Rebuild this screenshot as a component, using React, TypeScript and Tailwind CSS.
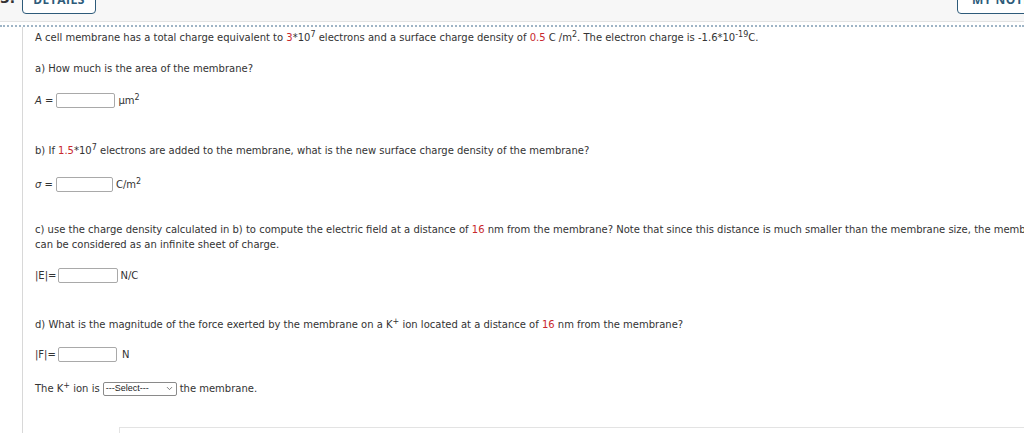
import { ChevronDown } from 'lucide-react';

function Red({ children }: { children: React.ReactNode }) {
  return <span className="text-[#c8282d]">{children}</span>;
}

function Sup({ children }: { children: React.ReactNode }) {
  return <sup className="text-[8px]">{children}</sup>;
}

function AnswerBox({ w = 'w-[59px]' }: { w?: string }) {
  return <span className={`inline-block ${w} h-[15px] border border-[#a9a9a9] rounded-[2px] bg-white align-middle`} />;
}

export default function App() {
  return (
    <div className="w-[1024px] h-[433px] overflow-hidden bg-white text-[#333] text-[10px] leading-[15px] font-['DejaVu_Sans',sans-serif]">
      {/* header strip */}
      <div className="relative h-[22px] bg-[#f7f7f7] border-b border-[#e3e3e3] overflow-hidden">
        <span className="absolute left-0 top-[-10px] text-[14px] leading-[16px] font-bold text-[#333]">3.</span>
        <div className="absolute left-[22px] top-[-14px] w-[74px] h-[28px] border border-[#2e5b7a] rounded-[4px] bg-white flex justify-center">
          <span className="mt-[6px] text-[12px] font-bold tracking-[0.5px] text-[#2e5b7a] leading-[14px] font-['Open_Sans',sans-serif]">DETAILS</span>
        </div>
        <div className="absolute left-[957px] top-[-14px] w-[120px] h-[28px] border border-[#2e5b7a] rounded-[4px] bg-white">
          <span className="block mt-[6px] ml-[14px] whitespace-nowrap text-[12px] font-bold tracking-[0.5px] text-[#2e5b7a] leading-[14px] font-['Open_Sans',sans-serif]">MY NOTES</span>
        </div>
      </div>
      <div className="mt-[3px] border-t-2 border-dotted border-[#9fb5c6]" />

      <div className="ml-[22px] border-l border-[#d8d8d8] pl-[12px] h-[410px] relative">
        <p className="pt-[3px]">
          A cell membrane has a total charge equivalent to <Red>3</Red>*10<Sup>7</Sup> electrons and a surface charge density of <Red>0.5</Red> C /m<Sup>2</Sup>. The electron charge is -1.6*10<Sup>-19</Sup>C.
        </p>

        <p className="mt-[16px]">a) How much is the area of the membrane?</p>
        <div className="mt-[17px] flex items-center gap-[3px]">
          <span className="italic">A =</span>
          <AnswerBox w="w-[59px]" />
          <span>μm<Sup>2</Sup></span>
        </div>

        <p className="mt-[35px]">
          b) If <Red>1.5</Red>*10<Sup>7</Sup> electrons are added to the membrane, what is the new surface charge density of the membrane?
        </p>
        <div className="mt-[19px] flex items-center gap-[3px]">
          <span className="italic">σ =</span>
          <AnswerBox w="w-[57px]" />
          <span>C/m<Sup>2</Sup></span>
        </div>

        <p className="mt-[30px] whitespace-nowrap">
          c) use the charge density calculated in b) to compute the electric field at a distance of <Red>16</Red> nm from the membrane? Note that since this distance is much smaller than the membrane size, the membrane
        </p>
        <p>can be considered as an infinite sheet of charge.</p>
        <div className="mt-[16px] flex items-center gap-[2px]">
          <span>|E|=</span>
          <AnswerBox w="w-[60px]" />
          <span>N/C</span>
        </div>

        <p className="mt-[34px]">
          d) What is the magnitude of the force exerted by the membrane on a K<Sup>+</Sup> ion located at a distance of <Red>16</Red> nm from the membrane?
        </p>
        <div className="mt-[15px] flex items-center gap-[2px]">
          <span>|F|=</span>
          <AnswerBox w="w-[59px]" />
          <span className="ml-[3px]">N</span>
        </div>

        <div className="mt-[19px] flex items-center gap-[3px]">
          <span>The K<Sup>+</Sup> ion is</span>
          <span className="relative inline-flex items-center w-[74px] h-[14px] border border-[#8a8a8a] rounded-[2px] bg-white pl-[2px] font-['Liberation_Sans',sans-serif] text-[9px] text-[#222]">
            ---Select---
            <ChevronDown className="absolute right-[2px] w-[9px] h-[9px] text-[#555]" />
          </span>
          <span>the membrane.</span>
        </div>

        <div className="absolute left-[96px] right-0 bottom-[4px] h-[6px] border-t border-l border-[#e3e3e3]" />
      </div>
    </div>
  );
}
